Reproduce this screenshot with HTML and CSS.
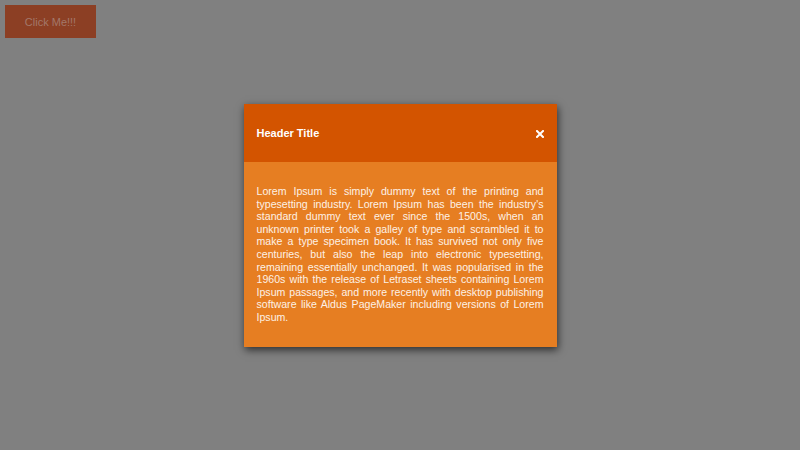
FILE: index.html
```html
<!DOCTYPE html>
<html>
<head>
<meta charset="utf-8">
<link rel="stylesheet" href="styles.css">
</head>
<body>
<div class="page">
  <button class="trigger">Click Me!!!</button>
  <div class="stage">
    <div class="modal">
      <div class="modal-header">
        <span class="title">Header Title</span>
        <svg class="close" width="8" height="8" viewBox="0 0 8 8"><path d="M1 1L7 7M7 1L1 7" stroke="#fff" stroke-width="2" stroke-linecap="square" fill="none"/></svg>
      </div>
      <div class="modal-body">
        <p>Lorem Ipsum is simply dummy text of the printing and typesetting industry. Lorem Ipsum has been the industry's standard dummy text ever since the 1500s, when an unknown printer took a galley of type and scrambled it to make a type specimen book. It has survived not only five centuries, but also the leap into electronic typesetting, remaining essentially unchanged. It was popularised in the 1960s with the release of Letraset sheets containing Lorem Ipsum passages, and more recently with desktop publishing software like Aldus PageMaker including versions of Lorem Ipsum.</p>
      </div>
    </div>
  </div>
</div>
</body>
</html>
```

FILE: styles.css
```css
html, body {
  margin: 0;
  padding: 0;
  background: #808080;
  font-family: "Liberation Sans", Arial, sans-serif;
}
.page {
  width: 800px;
  height: 450px;
  display: flex;
  flex-direction: column;
}
.trigger {
  align-self: flex-start;
  margin: 5px 0 0 5px;
  width: 91px;
  height: 33px;
  border: none;
  background: #8c3f24;
  color: #a3786a;
  font-family: "Liberation Sans", Arial, sans-serif;
  font-size: 11px;
  padding: 0;
}
.stage {
  display: flex;
  justify-content: center;
  padding-top: 66px;
}
.modal {
  width: 313px;
  box-shadow: 1px 3px 8px rgba(0, 0, 0, 0.65);
}
.modal-header {
  height: 58px;
  background: #d35400;
  display: flex;
  align-items: center;
  justify-content: space-between;
  padding: 0 13px 0 13px;
  color: #fff;
}
.title {
  font-weight: bold;
  font-size: 11px;
}
.close {
  display: block;
  margin-top: 2px;
}
.modal-body {
  background: #e67e22;
  padding: 23px 13px 23px 13px;
}
.modal-body p {
  margin: 0;
  color: #fdf1e6;
  font-size: 10.6px;
  line-height: 12.6px;
  text-align: justify;
}
```
